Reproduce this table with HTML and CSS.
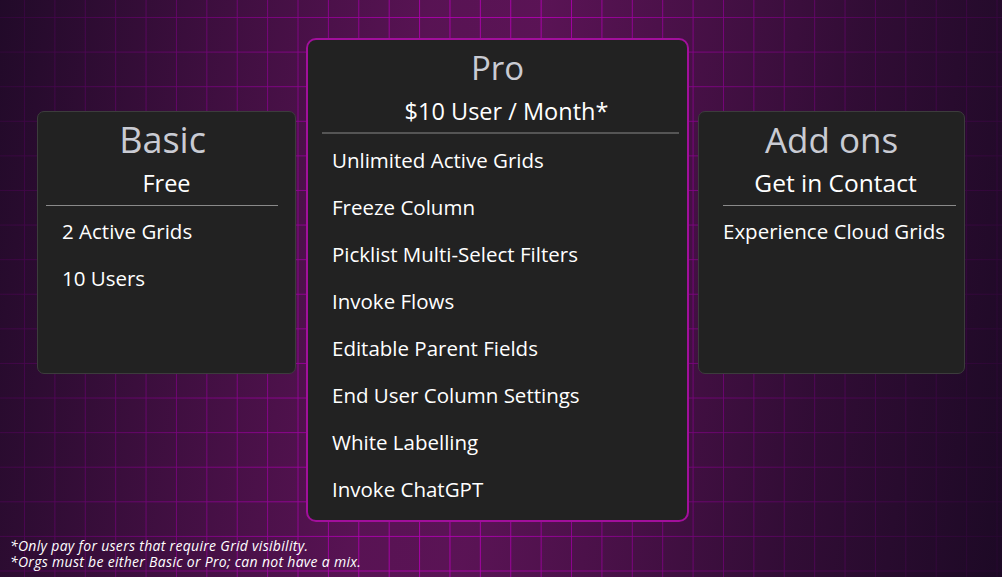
FILE: index.html
```html
<!DOCTYPE html>
<html lang="en">
<head>
<meta charset="utf-8">
<title>Pricing</title>
<link rel="stylesheet" href="styles.css">
</head>
<body>
<main class="plans">
  <section class="card card-side card-basic">
    <h2 class="card-title">Basic</h2>
    <p class="card-price">Free</p>
    <hr class="card-rule">
    <ul class="features">
      <li>2 Active Grids</li>
      <li>10 Users</li>
    </ul>
  </section>
  <section class="card card-pro">
    <h2 class="card-title">Pro</h2>
    <p class="card-price card-price-pro">$10 User / Month*</p>
    <hr class="card-rule">
    <ul class="features">
      <li>Unlimited Active Grids</li>
      <li>Freeze Column</li>
      <li>Picklist Multi-Select Filters</li>
      <li>Invoke Flows</li>
      <li>Editable Parent Fields</li>
      <li>End User Column Settings</li>
      <li>White Labelling</li>
      <li>Invoke ChatGPT</li>
    </ul>
  </section>
  <section class="card card-side card-addons">
    <h2 class="card-title">Add ons</h2>
    <p class="card-price card-price-addons">Get in Contact</p>
    <hr class="card-rule">
    <ul class="features">
      <li>Experience Cloud Grids</li>
    </ul>
  </section>
</main>
<footer class="notes">
  <p>*Only pay for users that require Grid visibility.</p>
  <p>*Orgs must be either Basic or Pro; can not have a mix.</p>
</footer>
</body>
</html>
```
FILE: styles.css
```css
* { box-sizing: border-box; }

html, body { height: 100%; }

body {
  margin: 0;
  width: 1002px;
  height: 577px;
  overflow: hidden;
  font-family: "Open Sans", "Liberation Sans", sans-serif;
  color: #ffffff;
  display: flex;
  flex-direction: column;
  background:
    linear-gradient(98deg,
      rgba(22, 8, 32, 0.84) 0%,
      rgba(22, 8, 32, 0.45) 20%,
      rgba(22, 8, 32, 0.08) 40%,
      rgba(22, 8, 32, 0.05) 50%,
      rgba(22, 8, 32, 0.3) 64%,
      rgba(22, 8, 32, 0.62) 80%,
      rgba(22, 8, 32, 0.9) 100%),
    linear-gradient(to right, rgba(190, 0, 190, 0.85) 0, rgba(190, 0, 190, 0.85) 1px, transparent 1px),
    linear-gradient(to bottom, rgba(190, 0, 190, 0.85) 0, rgba(190, 0, 190, 0.85) 1px, transparent 1px),
    #5e1458;
  background-size: 100% 100%, 30.4px 34.6px, 30.4px 34.6px, auto;
  background-position: 0 0, 24px 0, 0 17px, 0 0;
}

.plans {
  display: flex;
  justify-content: center;
  align-items: flex-start;
  gap: 10px;
  padding-top: 38px;
}

.card {
  background: #222222;
  padding-top: 7px;
}

.card-side {
  margin-top: 73px;
  height: 263px;
  border: 1px solid #3c3c3c;
  border-radius: 7px;
}

.card-basic { width: 259px; }
.card-basic .card-title { padding-right: 8px; font-size: 36px; }
.card-addons { width: 267px; margin-left: -1px; }

.card-pro {
  width: 383px;
  border: 2px solid #a20f9c;
  border-radius: 10px;
  padding-bottom: 7px;
}

.card-title {
  margin: 0;
  font-size: 35px;
  line-height: 42px;
  font-weight: 400;
  color: #c9cbd3;
  text-align: center;
}

.card-pro .card-title { font-size: 33px; }

.card-price {
  margin: 6px 0 0;
  font-size: 23.5px;
  line-height: 32px;
  font-weight: 500;
  text-align: center;
}

.card-price-pro { padding-left: 18px; font-weight: 400; }
.card-price-addons { padding-left: 8px; font-size: 24.5px; }

.card-rule {
  margin: 6px 17px 0 8px;
  border: 0;
  height: 1px;
  background: #8a8a8a;
}

.card-pro .card-rule {
  margin: 5px 8px 0 14px;
  height: 2px;
  background: #555555;
}

.card-addons .card-rule { margin-left: 24px; margin-right: 8px; }

.features {
  list-style: none;
  margin: 0;
  padding: 2px 0 0 24px;
}

.card-pro .features { padding-top: 3px; }

.features li {
  font-size: 20.5px;
  line-height: 47px;
  font-weight: 500;
  white-space: nowrap;
}

.notes {
  margin-top: 16px;
  padding-left: 10px;
  font-style: italic;
  font-weight: 500;
  font-size: 14px;
  line-height: 16px;
  letter-spacing: 0.3px;
}

.notes p { margin: 0; }
```
